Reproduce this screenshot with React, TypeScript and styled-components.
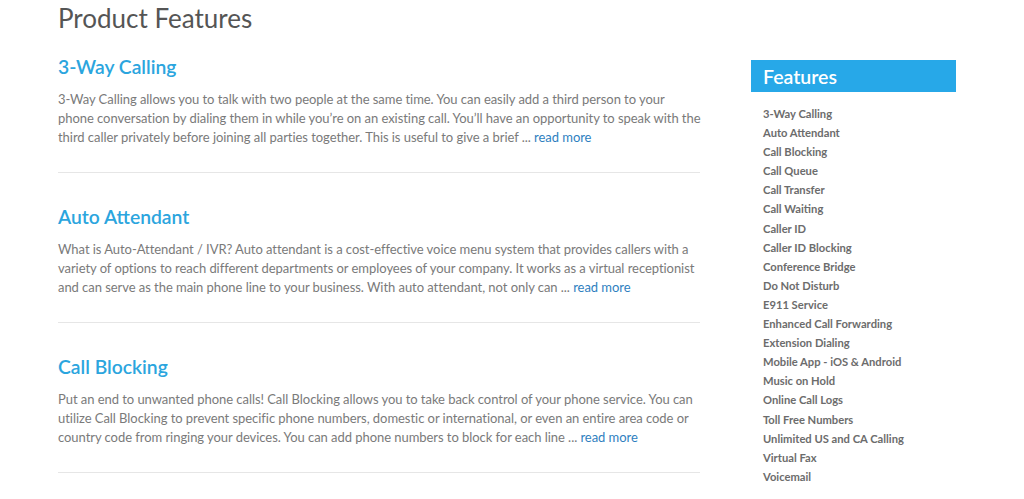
import React from "react";
import styled, { createGlobalStyle } from "styled-components";

const Global = createGlobalStyle`
  html, body { margin: 0; padding: 0; background: #fff; }
  body { font-family: Lato, "Open Sans", Arial, sans-serif; }
`;

const Page = styled.div`
  display: flex;
  gap: 51px;
  padding: 0 0 0 58px;
  width: 1024px;
  box-sizing: border-box;
`;

const Main = styled.main`
  width: 642px;
  flex: none;
`;

const PageTitle = styled.h1`
  margin: 0;
  padding-top: 3px;
  font-size: 26px;
  line-height: 30px;
  font-weight: 400;
  color: #555;
`;

const Section = styled.section`
  border-bottom: 1px solid #e6e6e6;
  padding: 32px 0 25px;
  &:first-of-type {
    padding-top: 22px;
  }
`;

const SectionTitle = styled.h2`
  margin: 0 0 11px;
  font-size: 19.3px;
  line-height: 24px;
  font-weight: 600;
  color: #2ba5de;
`;

const Body = styled.p`
  margin: 0 -1px 0 0;
  font-size: 13px;
  line-height: 19px;
  letter-spacing: -0.05px;
  color: #7a7a7a;
`;

const More = styled.a`
  color: #2f7fbf;
  text-decoration: none;
`;

const Aside = styled.aside`
  width: 205px;
  flex: none;
  padding-top: 60px;
`;

const AsideHead = styled.div`
  background: #27a8e8;
  color: #fff;
  height: 32px;
  display: flex;
  align-items: center;
  padding-left: 12px;
  font-size: 19.5px;
  font-weight: 600;
`;

const List = styled.ul`
  list-style: none;
  margin: 12px 0 0;
  padding: 0 0 0 12px;
`;

const Item = styled.li`
  font-size: 11.2px;
  line-height: 19.1px;
  font-weight: 700;
  color: #6c6c6c;
`;

const sections = [
  {
    title: "3-Way Calling",
    text: "3-Way Calling allows you to talk with two people at the same time. You can easily add a third person to your phone conversation by dialing them in while you\u2019re on an existing call. You\u2019ll have an opportunity to speak with the third caller privately before joining all parties together. This is useful to give a brief ...",
  },
  {
    title: "Auto Attendant",
    text: "What is Auto-Attendant / IVR? Auto attendant is a cost-effective voice menu system that provides callers with a variety of options to reach different departments or employees of your company. It works as a virtual receptionist and can serve as the main phone line to your business. With auto attendant, not only can ...",
  },
  {
    title: "Call Blocking",
    text: "Put an end to unwanted phone calls! Call Blocking allows you to take back control of your phone service. You can utilize Call Blocking to prevent specific phone numbers, domestic or international, or even an entire area code or country code from ringing your devices. You can add phone numbers to block for each line ...",
  },
];

const features = [
  "3-Way Calling",
  "Auto Attendant",
  "Call Blocking",
  "Call Queue",
  "Call Transfer",
  "Call Waiting",
  "Caller ID",
  "Caller ID Blocking",
  "Conference Bridge",
  "Do Not Disturb",
  "E911 Service",
  "Enhanced Call Forwarding",
  "Extension Dialing",
  "Mobile App - iOS & Android",
  "Music on Hold",
  "Online Call Logs",
  "Toll Free Numbers",
  "Unlimited US and CA Calling",
  "Virtual Fax",
  "Voicemail",
];

export default function App() {
  return (
    <>
      <Global />
      <Page>
        <Main>
          <PageTitle>Product Features</PageTitle>
          {sections.map((s) => (
            <Section key={s.title}>
              <SectionTitle>{s.title}</SectionTitle>
              <Body>
                {s.text} <More href="#">read more</More>
              </Body>
            </Section>
          ))}
        </Main>
        <Aside>
          <AsideHead>Features</AsideHead>
          <List>
            {features.map((f) => (
              <Item key={f}>{f}</Item>
            ))}
          </List>
        </Aside>
      </Page>
    </>
  );
}
